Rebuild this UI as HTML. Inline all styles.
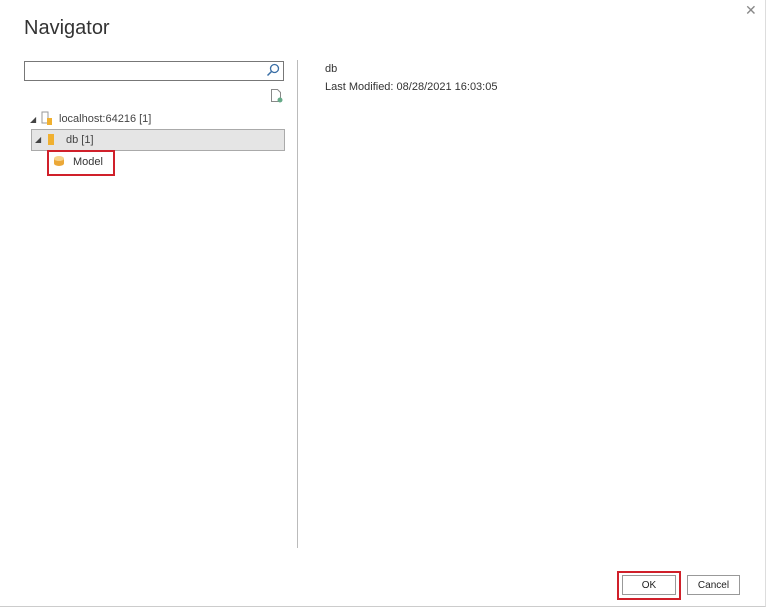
<!DOCTYPE html>
<html><head><style>
body{margin:0;width:768px;height:611px;background:#fff;font-family:"Liberation Sans",sans-serif;position:relative;overflow:hidden;color:#222}
.a{position:absolute}
</style></head><body>
<div class="a" style="left:0;top:0;width:765px;height:606px;border-right:1px solid #ddd;border-bottom:1px solid #ccc"></div>
<div class="a" style="left:24px;top:17px;font-size:20px;color:#333">Navigator</div>
<div class="a" style="left:745px;top:2px;font-size:14px;color:#888">✕</div>
<div class="a" style="left:24px;top:61px;width:258px;height:18px;border:1px solid #777"></div>
<svg class="a" style="left:266px;top:63px" width="14" height="14"><circle cx="8.5" cy="5.5" r="4" fill="none" stroke="#3a6ea5" stroke-width="1.3"/><line x1="5.5" y1="8.5" x2="1.5" y2="12.5" stroke="#3a6ea5" stroke-width="1.5"/></svg>
<svg class="a" style="left:270px;top:88px" width="14" height="16"><path d="M1.5 1.5h6l3 3v9h-9z" fill="none" stroke="#888"/><circle cx="10" cy="12" r="2.5" fill="#6a8" /></svg>
<div class="a" style="left:30px;top:115px;font-size:8px;color:#444">◢</div>
<svg class="a" style="left:41px;top:111px" width="12" height="15"><rect x="1" y="1" width="6" height="11" fill="none" stroke="#999"/><rect x="6" y="7" width="5" height="7" fill="#f0b030"/></svg>
<div class="a" style="left:59px;top:113px;font-size:11px;color:#444">localhost:64216 [1]</div>
<div class="a" style="left:31px;top:129px;width:252px;height:20px;background:#e5e5e5;border:1px solid #aaa"></div>
<div class="a" style="left:35px;top:135px;font-size:8px;color:#444">◢</div>
<div class="a" style="left:48px;top:134px;width:6px;height:11px;background:#f0b030"></div>
<div class="a" style="left:66px;top:134px;font-size:11px;color:#444">db [1]</div>
<div class="a" style="left:47px;top:150px;width:64px;height:22px;border:2px solid #d0202a"></div>
<svg class="a" style="left:53px;top:155px" width="12" height="12"><ellipse cx="6" cy="3.5" rx="5" ry="2.5" fill="#f6d38a"/><path d="M1 3.5v5a5 2.5 0 0 0 10 0v-5a5 2.5 0 0 1-10 0z" fill="#eba838"/></svg>
<div class="a" style="left:73px;top:156px;font-size:11px;color:#333">Model</div>
<div class="a" style="left:297px;top:60px;width:1px;height:488px;background:#bbb"></div>
<div class="a" style="left:325px;top:63px;font-size:11px;color:#333">db</div>
<div class="a" style="left:325px;top:81px;font-size:11px;color:#333">Last Modified: 08/28/2021 16:03:05</div>
<div class="a" style="left:617px;top:571px;width:60px;height:25px;border:2px solid #d0202a"></div>
<div class="a" style="left:622px;top:575px;width:52px;height:18px;border:1px solid #999;font-size:10px;text-align:center;line-height:20px">OK</div>
<div class="a" style="left:687px;top:575px;width:51px;height:18px;border:1px solid #999;font-size:10px;text-align:center;line-height:20px">Cancel</div>
</body></html>
